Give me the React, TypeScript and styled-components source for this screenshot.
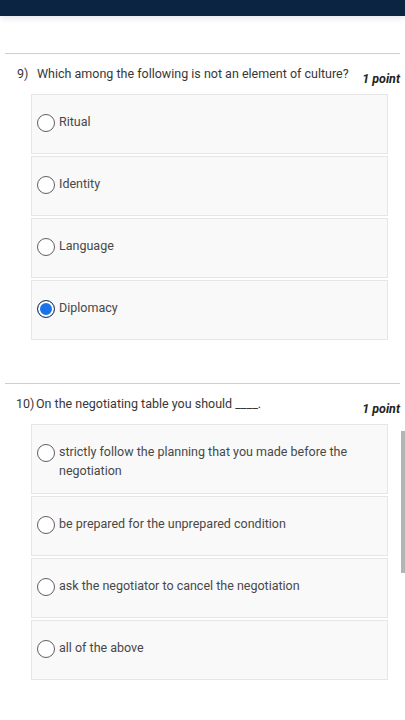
import * as React from 'react';
import styled, { createGlobalStyle } from 'styled-components';

const GlobalStyle = createGlobalStyle`
    html, body {
        margin: 0;
        padding: 0;
        background: #ffffff;
    }
    body {
        font-family: Roboto, "Liberation Sans", Arial, sans-serif;
        font-weight: 400;
        color: #3a3a3a;
    }
`;

interface IOption {
    label: string;
    checked?: boolean;
}

interface IQuestion {
    number: string;
    text: string;
    points: string;
    options: IOption[];
}

const questions: IQuestion[] = [
    {
        number: '9)',
        text: 'Which among the following is not an element of culture?',
        points: '1 point',
        options: [
            { label: 'Ritual' },
            { label: 'Identity' },
            { label: 'Language' },
            { label: 'Diplomacy', checked: true }
        ]
    },
    {
        number: '10)',
        text: 'On the negotiating table you should ____.',
        points: '1 point',
        options: [
            { label: 'strictly follow the planning that you made before the negotiation' },
            { label: 'be prepared for the unprepared condition' },
            { label: 'ask the negotiator to cancel the negotiation' },
            { label: 'all of the above' }
        ]
    }
];

const Page = styled.div`
    position: relative;
    width: 405px;
    height: 720px;
    overflow: hidden;
    background: #ffffff;
`;

const TopBar = styled.div`
    height: 16px;
    background: #0a2441;
    box-shadow: 0 2px 6px rgba(10, 36, 65, 0.12);
`;

const Content = styled.div`
    padding-top: 37px;
    display: flex;
    flex-direction: column;
    gap: 43px;
`;

const Section = styled.section`
    display: flex;
    flex-direction: column;
`;

const Divider = styled.hr`
    margin: 0 5px;
    border: none;
    border-top: 1px solid #cfcfcf;
    height: 0;
`;

const Header = styled.div`
    display: flex;
    align-items: flex-start;
    padding: 10px 5px 0 16px;
    font-size: 12.5px;
    font-weight: 400;
    line-height: 19px;
`;

const Number = styled.span<{ $wide?: boolean }>`
    flex: none;
    width: 20px;
    padding-left: ${p => (p.$wide ? '0' : '1px')};
    color: #383838;
`;

const QuestionText = styled.span`
    flex: 1;
    color: #383838;
`;

const Points = styled.span`
    flex: none;
    margin-top: 5px;
    white-space: nowrap;
    font-weight: 700;
    font-style: italic;
    color: #222;
    font-size: 12.5px;
`;

const OptionList = styled.div`
    margin: 6px 0 0 31px;
    width: 357px;
    display: flex;
    flex-direction: column;
    gap: 2px;
`;

const OptionBox = styled.label`
    box-sizing: border-box;
    min-height: 60px;
    display: flex;
    align-items: flex-start;
    gap: 4px;
    padding: 16px 8px 13px 5px;
    background: #f9f9f9;
    border: 1px solid #e6e6e6;
    font-size: 12.5px;
    font-weight: 400;
    line-height: 19px;
    color: #484848;
`;

const Radio = styled.span<{ $checked?: boolean }>`
    flex: none;
    box-sizing: border-box;
    width: 18px;
    height: 18px;
    margin-top: 3px;
    border-radius: 50%;
    border: ${p => (p.$checked ? '1.5px solid #2a3a55' : '1px solid #5f5f5f')};
    background: ${p => (p.$checked ? '#1a73e8' : '#ffffff')};
    box-shadow: ${p => (p.$checked ? 'inset 0 0 0 2px #ffffff' : 'none')};
`;

const OptionLabel = styled.span`
    flex: 1;
    margin-top: 1px;
`;

const ScrollThumb = styled.div`
    position: absolute;
    right: 0;
    top: 431px;
    width: 4px;
    height: 142px;
    background: #b4b4b4;
`;

const Question = ({ q }: { q: IQuestion }) => (
    <Section>
        <Divider />
        <Header>
            <Number $wide={q.number.length > 2}>{q.number}</Number>
            <QuestionText>{q.text}</QuestionText>
            <Points>{q.points}</Points>
        </Header>
        <OptionList>
            {q.options.map(o => (
                <OptionBox key={o.label}>
                    <Radio $checked={o.checked} />
                    <OptionLabel>{o.label}</OptionLabel>
                </OptionBox>
            ))}
        </OptionList>
    </Section>
);

export default function App() {
    return (
        <Page>
            <GlobalStyle />
            <TopBar />
            <Content>
                {questions.map(q => (
                    <Question key={q.number} q={q} />
                ))}
            </Content>
            <ScrollThumb />
        </Page>
    );
}
